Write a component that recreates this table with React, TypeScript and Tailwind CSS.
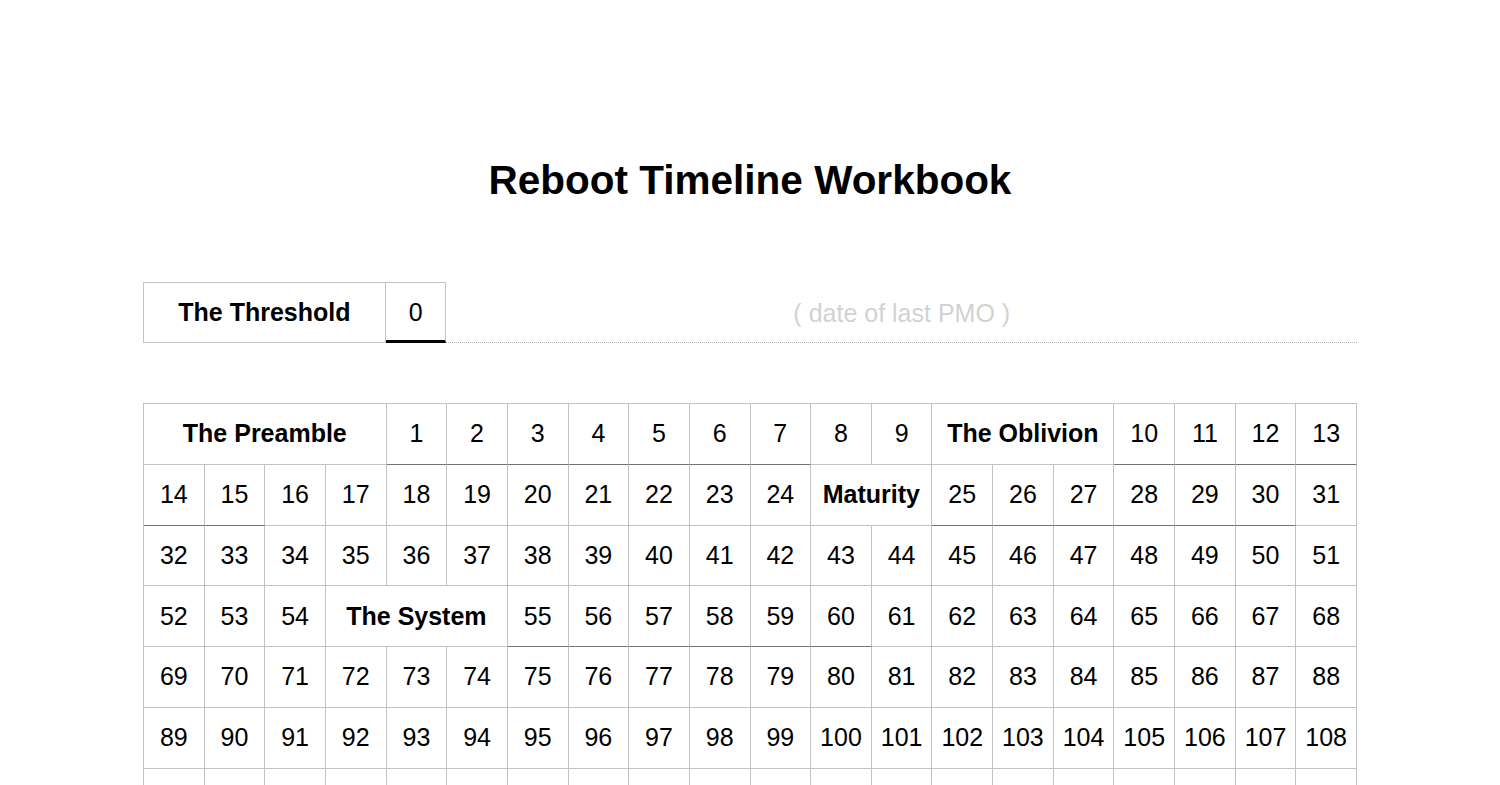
import React from "react";

type Cell = { label?: string; n?: number; span?: number; dark?: boolean };

const range = (a: number, b: number, dark = false): Cell[] => {
  const out: Cell[] = [];
  for (let i = a; i <= b; i++) out.push({ n: i, dark });
  return out;
};

const rows: Cell[][] = [
  [
    { label: "The Preamble", span: 4 },
    ...range(1, 7, true),
    ...range(8, 9),
    { label: "The Oblivion", span: 3 },
    ...range(10, 13, true),
  ],
  [...range(14, 15, true), ...range(16, 24), { label: "Maturity", span: 2 }, ...range(25, 30, true), ...range(31, 31)],
  [...range(32, 51)],
  [...range(52, 54), { label: "The System", span: 3 }, ...range(55, 60, true), ...range(61, 68)],
  [...range(69, 88)],
  [...range(89, 108)],
  [...range(109, 128)],
];

function GridCell({ c }: { c: Cell }) {
  const span =
    c.span === 4 ? "col-span-4" : c.span === 3 ? "col-span-3" : c.span === 2 ? "col-span-2" : "col-span-1";
  const border = c.dark ? "border-b-[#727272]" : "border-b-[#c2c2c2]";
  return (
    <div
      className={`${span} flex h-[60.8px] items-center justify-center border-r border-b border-r-[#c2c2c2] ${border} text-[25px] text-black ${
        c.label ? "font-bold" : "font-normal"
      }`}
    >
      {c.label ?? c.n}
    </div>
  );
}

export default function App() {
  return (
    <div className="min-h-screen bg-white font-['Liberation_Sans',Arial,Helvetica,sans-serif] text-black">
      <div className="mx-auto w-[1214px] pt-[157px]">
        <h1 className="text-center text-[40.5px] font-bold leading-[46px]">Reboot Timeline Workbook</h1>

        <div className="mt-[79px] flex h-[61px]">
          <div className="flex w-[242.8px] items-center justify-center border border-[#c2c2c2] text-[25px] font-bold">
            The Threshold
          </div>
          <div className="flex w-[60.7px] items-center justify-center border-t border-r border-[#c2c2c2] border-b-[3px] border-b-black pt-[3px] text-[25px]">
            0
          </div>
          <div className="flex flex-1 items-center justify-center border-b border-dotted border-[#b5b5b5] pt-[3px] text-[25px] text-[#d2d2d2]">
            ( date of last PMO )
          </div>
        </div>

        <div className="mt-[60px] grid grid-cols-[repeat(20,minmax(0,1fr))] border-t border-l border-[#c2c2c2]">
          {rows.map((r, i) => (
            <React.Fragment key={i}>
              {r.map((c, j) => (
                <GridCell key={j} c={c} />
              ))}
            </React.Fragment>
          ))}
        </div>
        <div className="h-[80px]" />
      </div>
    </div>
  );
}
